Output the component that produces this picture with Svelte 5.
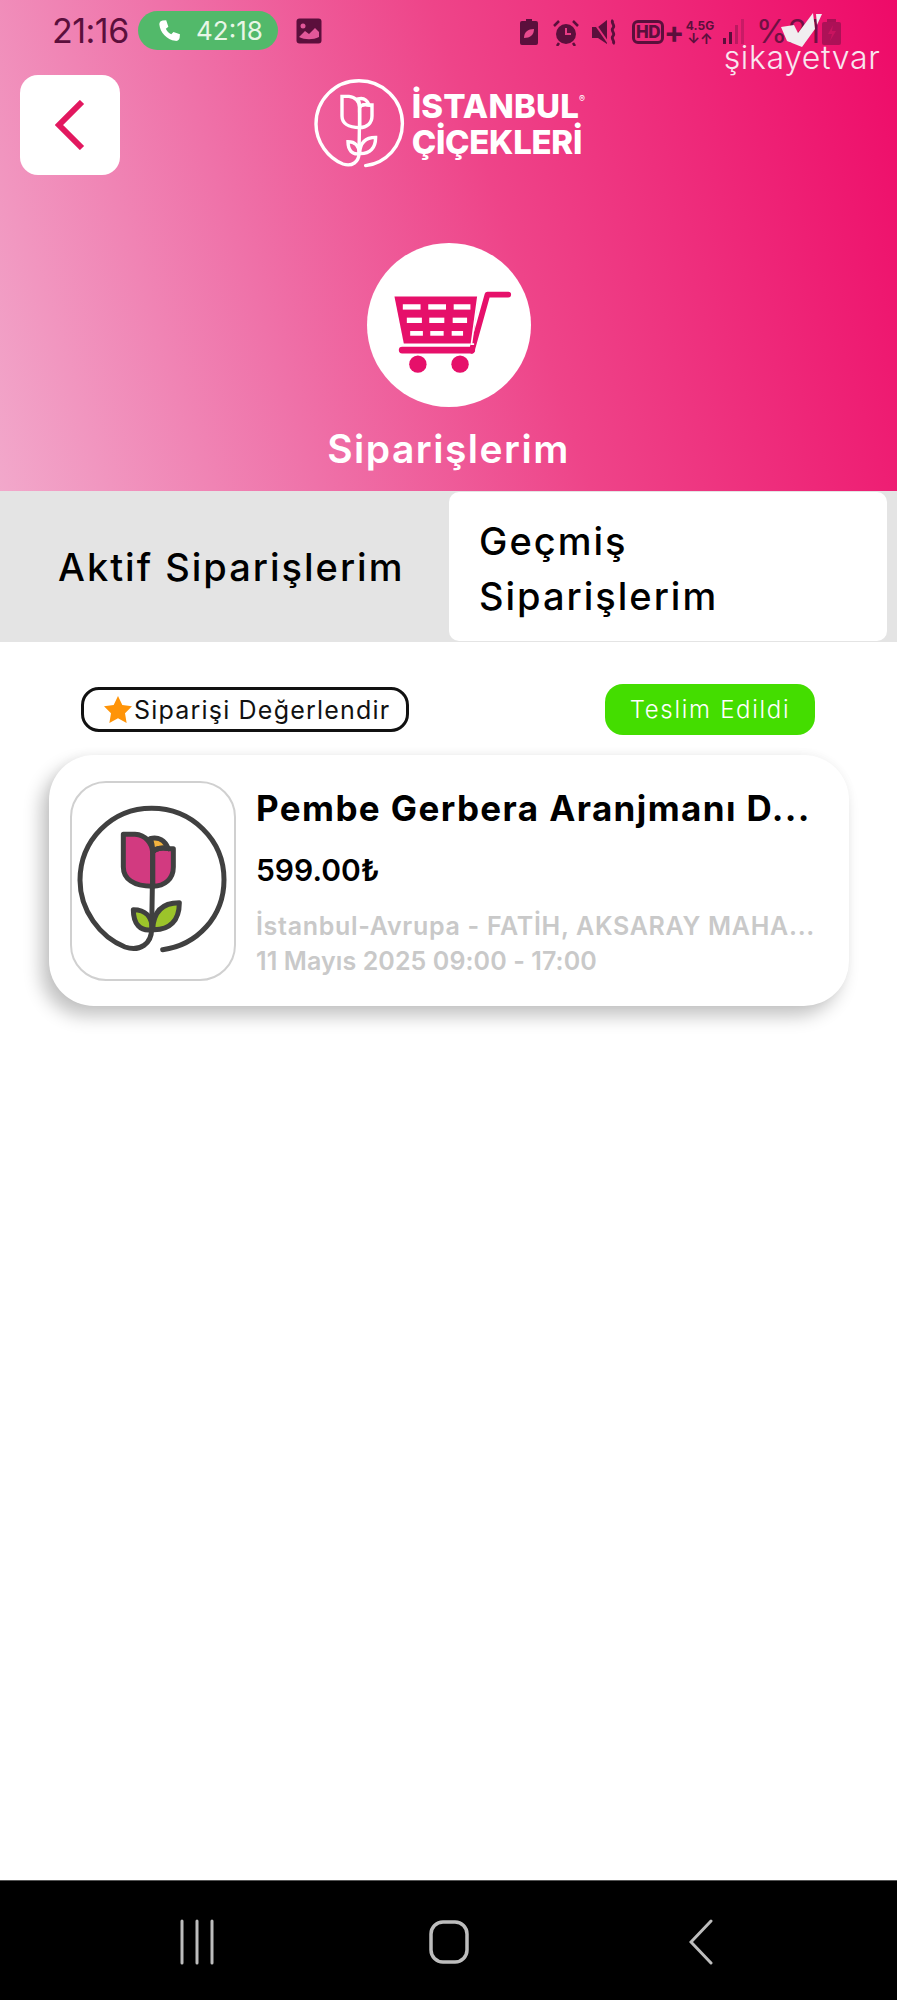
<script>
  const ring = "M368 838 C 470 825 552 740 552 628 C 552 508 455 414 335 414 C 215 414 120 510 120 630 C 120 720 180 800 255 830 C 300 845 335 820 335 775 L 337 650";
  const petalLeft = "M250 492 H 285 C 318 494 336 520 338 545 V 648 C 280 648 250 625 250 590 Z";
  const petalRight = "M338 545 C 345 535 365 530 385 535 H 400 V 590 C 400 625 375 648 338 648 Z";
  const bud = "M330 505 C 355 498 375 510 385 535 C 365 530 345 535 338 545 C 338 530 335 515 330 505 Z";
  const leafLeft = "M280 718 C 320 718 335 740 338 778 C 300 785 280 760 280 718 Z";
  const leafRight = "M418 697 C 370 697 340 720 338 778 C 390 780 418 750 418 697 Z";
  const windows = [
    [307, 253, 53, 16], [383, 253, 53, 16], [459, 253, 50, 16],
    [319, 293, 45, 16], [386, 293, 45, 16], [456, 293, 43, 16],
    [329, 333, 38, 14], [389, 333, 40, 14], [453, 333, 34, 14]
  ];
</script>

<div class="page">
  <header class="hero">
    <div class="status">
      <span class="clock">21:16</span>
      <span class="call">
        <svg class="phone" viewBox="0 0 24 24"><path d="M6.200 2.200 9.400 2l2 6-2.300 2c1 2.400 2.600 4 5 5.100l2-2.200 6 2-.3 3.300c-.2 2-2 3.200-4 2.900C10 19.900 3.900 13.800 3.100 6c-.2-1.900 1.100-3.600 3.100-3.800Z" /></svg>
        <span>42:18</span>
      </span>
      <svg class="gallery" viewBox="0 0 26 26"><rect x="0.500" y="0.500" width="25" height="25" rx="3" /><circle cx="7" cy="8" r="2.500" fill="#e2589a" /><path d="M3 19 9 13l4 3 6-6 4 4v5c-6 3-14 3-20 0Z" fill="#e2589a" /></svg>

      <span class="status-right">
        <svg class="si" width="18" height="26" viewBox="0 0 18 26"><path d="M6 0h6v2h4a2 2 0 0 1 2 2v20a2 2 0 0 1-2 2H2a2 2 0 0 1-2-2V4a2 2 0 0 1 2-2h4Z" /><path d="M4 19c0-6 4-9 10-9 0 6-4 9-10 9Z" fill="#e94a8e" /></svg>
        <svg class="si alarm" width="26" height="27" viewBox="0 0 26 27"><circle cx="13" cy="15" r="10" /><path d="M1 7 6 2M25 7 20 2M6 24l-2 3M20 24l2 3" stroke="#5b0f3c" stroke-width="2.500" fill="none" /><path d="M13 9v6h5" stroke="#e83a84" stroke-width="2" fill="none" /></svg>
        <svg class="si mute" width="26" height="26" viewBox="0 0 26 26"><path d="M0 8h6l9-7v24l-9-6H0Z" /><path d="M1 2l16 23" stroke="#e8307e" stroke-width="2" /><path d="M21 1c-3 3 3 5 0 8s3 5 0 8 3 5 0 8" stroke="#5b0f3c" stroke-width="2.800" fill="none" /></svg>
        <span class="hd"><span class="hd-box">HD</span><span class="plus">+</span></span>
        <span class="net"><span class="net-top">4.5G</span><span class="net-arrows">↓↑</span></span>
        <svg class="si signal" width="24" height="26" viewBox="0 0 24 26"><rect x="0" y="19" width="3" height="6" /><rect x="6" y="13" width="3" height="12" /><rect x="12" y="6" width="3" height="19" opacity=".35" /><rect x="18" y="0" width="3" height="25" opacity=".25" /></svg>
        <span class="pct">%21</span>
        <svg class="si batt" width="19" height="26" viewBox="0 0 19 26"><rect x="5" y="0" width="9" height="3" opacity=".6" /><rect x="0" y="3" width="19" height="23" rx="2" opacity=".55" /><path d="M11 6 6 15h4l-2 7 6-10h-4Z" fill="#c0145c" /></svg>
      </span>
    </div>

    <div class="watermark">
      <svg class="wm-check" width="42" height="34" viewBox="0 0 42 34"><path d="M0 14 13 12 17 20 32 0 34 16 21 34 6 28Z" fill="#f1eef0" /><path d="M35 1h6L36 12Z" fill="#f1eef0" /></svg>
      <span class="wm-text">şikayetvar</span>
    </div>

    <div class="bar">
      <button class="back" aria-label="Geri">
        <svg width="30" height="50" viewBox="0 0 30 50"><path d="M27 2 4 25l23 23" fill="none" stroke="#e2185f" stroke-width="6" /></svg>
      </button>
      <div class="logo">
        <svg class="logo-mark" viewBox="100 395 470 470">
          <g fill="none" stroke="#fff" stroke-width="17">
            <path d={ring} stroke-linecap="round" />
            <path d={petalLeft} /><path d={petalRight} /><path d={bud} />
            <path d={leafLeft} /><path d={leafRight} />
          </g>
        </svg>
        <div class="logo-text">
          <span class="l1">İSTANBUL<sup>®</sup></span>
          <span class="l2">ÇİÇEKLERİ</span>
        </div>
      </div>
    </div>

    <div class="cart-disc">
      <svg viewBox="200 70 490 490" width="164" height="164">
        <g fill="#e6106a">
          <path d="M282 230 H532 L515 370 H310 Z" />
          <circle cx="352" cy="432" r="26" /><circle cx="478" cy="432" r="26" />
        </g>
        <path d="M513 390 H305" stroke="#e6106a" stroke-width="20" stroke-linecap="round" />
        <path d="M513 392 L560 224 H622" fill="none" stroke="#e6106a" stroke-width="17" stroke-linecap="round" stroke-linejoin="round" />
        <path d="M532 226 L512 372 H520" fill="none" stroke="#fff" stroke-width="5" />
        {#each windows as w}
          <rect x={w[0]} y={w[1]} width={w[2]} height={w[3]} fill="#fff" />
        {/each}
      </svg>
    </div>
    <h1>Siparişlerim</h1>
  </header>

  <nav class="tabs">
    <div class="tab">Aktif Siparişlerim</div>
    <div class="tab active">Geçmiş<br />Siparişlerim</div>
  </nav>

  <main class="content">
    <div class="row">
      <button class="rate">
        <svg width="28" height="27" viewBox="0 0 24 23"><path d="M12 0l3.700 7.600 8.300 1.200-6 5.900 1.400 8.300L12 19l-7.400 4L6 14.700 0 8.800l8.300-1.200Z" fill="#ff9408" /></svg>
        <span>Siparişi Değerlendir</span>
      </button>
      <span class="state">Teslim Edildi</span>
    </div>

    <article class="card">
      <div class="thumb">
        <svg viewBox="90 332 495 597" width="165" height="199">
          <path d={petalLeft} fill="#d23a80" />
          <path d={petalRight} fill="#d23a80" />
          <path d={bud} fill="#f3b33f" />
          <path d={leafLeft} fill="#9cc42a" />
          <path d={leafRight} fill="#9cc42a" />
          <g fill="none" stroke="#404040" stroke-width="15" stroke-linejoin="round">
            <path d={ring} stroke-linecap="round" />
            <path d={petalLeft} /><path d={petalRight} /><path d={bud} />
            <path d={leafLeft} /><path d={leafRight} />
          </g>
        </svg>
      </div>
      <div class="info">
        <div class="name">Pembe Gerbera Aranjmanı D...</div>
        <div class="price">599.00₺</div>
        <div class="meta addr">İstanbul-Avrupa - FATİH, AKSARAY MAHA...</div>
        <div class="meta date">11 Mayıs 2025 09:00 - 17:00</div>
      </div>
    </article>
  </main>

  <footer class="softkeys">
    <svg width="36" height="46" viewBox="0 0 36 46"><path d="M3 2v42M18 2v42M33 2v42" stroke="#bdbdbd" stroke-width="3" stroke-linecap="round" /></svg>
    <svg width="40" height="46" viewBox="0 0 40 46"><rect x="2" y="3" width="36" height="40" rx="12" fill="none" stroke="#bdbdbd" stroke-width="3.500" /></svg>
    <svg width="24" height="46" viewBox="0 0 24 46"><path d="M22 2 2 23l20 21" fill="none" stroke="#bdbdbd" stroke-width="3" stroke-linecap="round" /></svg>
  </footer>
</div>

<style>
  :global(body) { margin: 0; background: #fff; }
  .page {
    width: 897px;
    height: 2000px;
    display: flex;
    flex-direction: column;
    font-family: Inter, "Noto Sans", sans-serif;
    color: #000;
    overflow: hidden;
  }
  .hero {
    position: relative;
    height: 491px;
    flex: none;
    background: linear-gradient(72deg, #f2a8cb 0%, #ef72a9 30%, #ee4489 56%, #ee0a68 100%);
  }
  .status {
    height: 75px;
    box-sizing: border-box;
    padding: 11px 0 0 52px;
    display: flex;
    align-items: flex-start;
    color: #5b0f3c;
  }
  .clock { font-size: 34px; line-height: 40px; width: 86px; letter-spacing: -0.5px; white-space: nowrap; }
  .call {
    width: 140px;
    height: 39px;
    box-sizing: border-box;
    padding-left: 18px;
    border-radius: 20px;
    background: #52b96a;
    color: #e8f6e6;
    display: flex;
    align-items: center;
    gap: 14px;
    font-size: 26px;
  }
  .phone { width: 26px; height: 26px; fill: #fff; }
  .gallery { width: 26px; height: 26px; margin: 7px 0 0 18px; fill: #5b0f3c; }
  .status-right {
    margin-left: 198px;
    margin-top: 7px;
    height: 28px;
    display: flex;
    align-items: center;
  }
  .si { fill: #5b0f3c; flex: none; }
  .alarm { margin-left: 15px; }
  .mute { margin-left: 13px; }
  .hd { margin-left: 14px; display: flex; align-items: center; width: 47px; flex: none; }
  .hd-box {
    border: 3px solid #5b0f3c;
    border-radius: 6px;
    font-size: 17px;
    line-height: 18px;
    font-weight: 800;
    padding: 0 1px;
    letter-spacing: -0.5px;
  }
  .plus { font-size: 30px; line-height: 28px; font-weight: 700; margin-left: 0; }
  .net { margin-left: 6px; width: 30px; flex: none; display: flex; flex-direction: column; align-items: center; font-weight: 700; }
  .net-top { font-size: 12px; line-height: 12px; }
  .net-arrows { font-size: 14px; line-height: 13px; }
  .signal { margin-left: 8px; }
  .pct { margin-left: 9px; font-size: 32px; line-height: 28px; opacity: .85; width: 66px; flex: none; white-space: nowrap; }
  .batt { opacity: .8; }

  .watermark {
    position: absolute;
    right: 15px;
    top: 13px;
    width: 160px;
    display: flex;
    flex-direction: column;
    align-items: center;
  }
  .wm-text {
    font-size: 32px;
    line-height: 30px;
    margin-top: -4px;
    color: #f8e6ef;
    font-weight: 300;
    letter-spacing: 0.6px;
    white-space: nowrap;
  }

  .bar {
    height: 100px;
    display: grid;
    grid-template-columns: 120px 1fr 120px;
    align-items: center;
  }
  .back {
    margin-left: 20px;
    width: 100px;
    height: 100px;
    border: 0;
    padding: 0;
    border-radius: 18px;
    background: #fff;
    display: flex;
    align-items: center;
    justify-content: center;
  }
  .logo { display: flex; align-items: center; justify-content: center; gap: 6px; margin-top: -2px; }
  .logo-mark { width: 94px; height: 94px; }
  .logo-text {
    display: flex;
    flex-direction: column;
    color: #fff;
    font-weight: 800;
    font-size: 33px;
    line-height: 36px;
  }
  .logo-text span { white-space: nowrap; }
  .l1 { letter-spacing: 0.2px; }
  .l2 { letter-spacing: -0.3px; }
  .logo-text sup { font-size: 9px; line-height: 0; vertical-align: 16px; font-weight: 400; }

  .cart-disc {
    width: 164px;
    height: 164px;
    margin: 68px auto 0;
    border-radius: 50%;
    background: #fff;
  }
  h1 {
    margin: 17px 0 0;
    text-align: center;
    font-size: 39px;
    line-height: 50px;
    font-weight: 600;
    color: #fff;
    letter-spacing: 1.500px;
  }

  .tabs { height: 151px; flex: none; display: flex; background: #e4e4e4; }
  .tab {
    width: 449px;
    box-sizing: border-box;
    padding-left: 58px;
    display: flex;
    align-items: center;
    font-size: 38px;
    font-weight: 500;
    letter-spacing: 2px;
    white-space: nowrap;
  }
  .tab.active {
    display: block;
    width: 438px;
    margin: 1px 0;
    padding: 22px 0 0 30px;
    background: #fff;
    border-radius: 10px;
    line-height: 55px;
  }

  .content { flex: 1; padding: 42px 0 0 49px; }
  .row { width: 766px; display: flex; align-items: center; justify-content: space-between; padding-left: 32px; box-sizing: border-box; }
  .rate {
    width: 328px;
    height: 45px;
    box-sizing: border-box;
    padding: 0 0 0 20px;
    display: flex;
    align-items: center;
    gap: 2px;
    background: #fff;
    border: 3px solid #111;
    border-radius: 18px;
    font: inherit;
    font-size: 25px;
    color: #111;
    letter-spacing: 1.200px;
    white-space: nowrap;
  }
  .state {
    width: 210px;
    height: 51px;
    border-radius: 18px;
    background: #44dd00;
    color: #fff;
    font-size: 24px;
    font-weight: 300;
    letter-spacing: 1.700px;
    display: flex;
    align-items: center;
    justify-content: center;
  }
  .card {
    margin-top: 20px;
    width: 800px;
    height: 251px;
    box-sizing: border-box;
    padding: 26px 0 0 21px;
    display: flex;
    gap: 20px;
    background: #fff;
    border-radius: 45px;
    box-shadow: -8px 10px 18px rgba(0, 0, 0, 0.24), 0 -2px 10px rgba(0, 0, 0, 0.03);
  }
  .thumb {
    width: 166px;
    height: 200px;
    flex: none;
    box-sizing: border-box;
    border: 2px solid #d0d0d0;
    border-radius: 36px;
    overflow: hidden;
  }
  .thumb svg { display: block; margin: -2px; }
  .info { width: 562px; white-space: nowrap; }
  .name { margin-top: 6px; font-size: 35px; line-height: 42px; font-weight: 700; letter-spacing: 1.400px; }
  .price { margin-top: 21px; font-size: 30px; line-height: 40px; font-weight: 600; }
  .meta { font-size: 25px; line-height: 35px; font-weight: 600; color: #c9c9c9; }
  .addr { margin-top: 19px; letter-spacing: 0.700px; }
  .date { letter-spacing: 0.100px; }

  .softkeys {
    height: 120px;
    flex: none;
    box-sizing: border-box;
    border-top: 1px solid #555;
    background: #000;
    display: flex;
    align-items: center;
    padding-top: 2px;
  }
  .softkeys svg:nth-child(1) { margin-left: 179px; }
  .softkeys svg:nth-child(2) { margin-left: 214px; }
  .softkeys svg:nth-child(3) { margin-left: 220px; }
</style>
